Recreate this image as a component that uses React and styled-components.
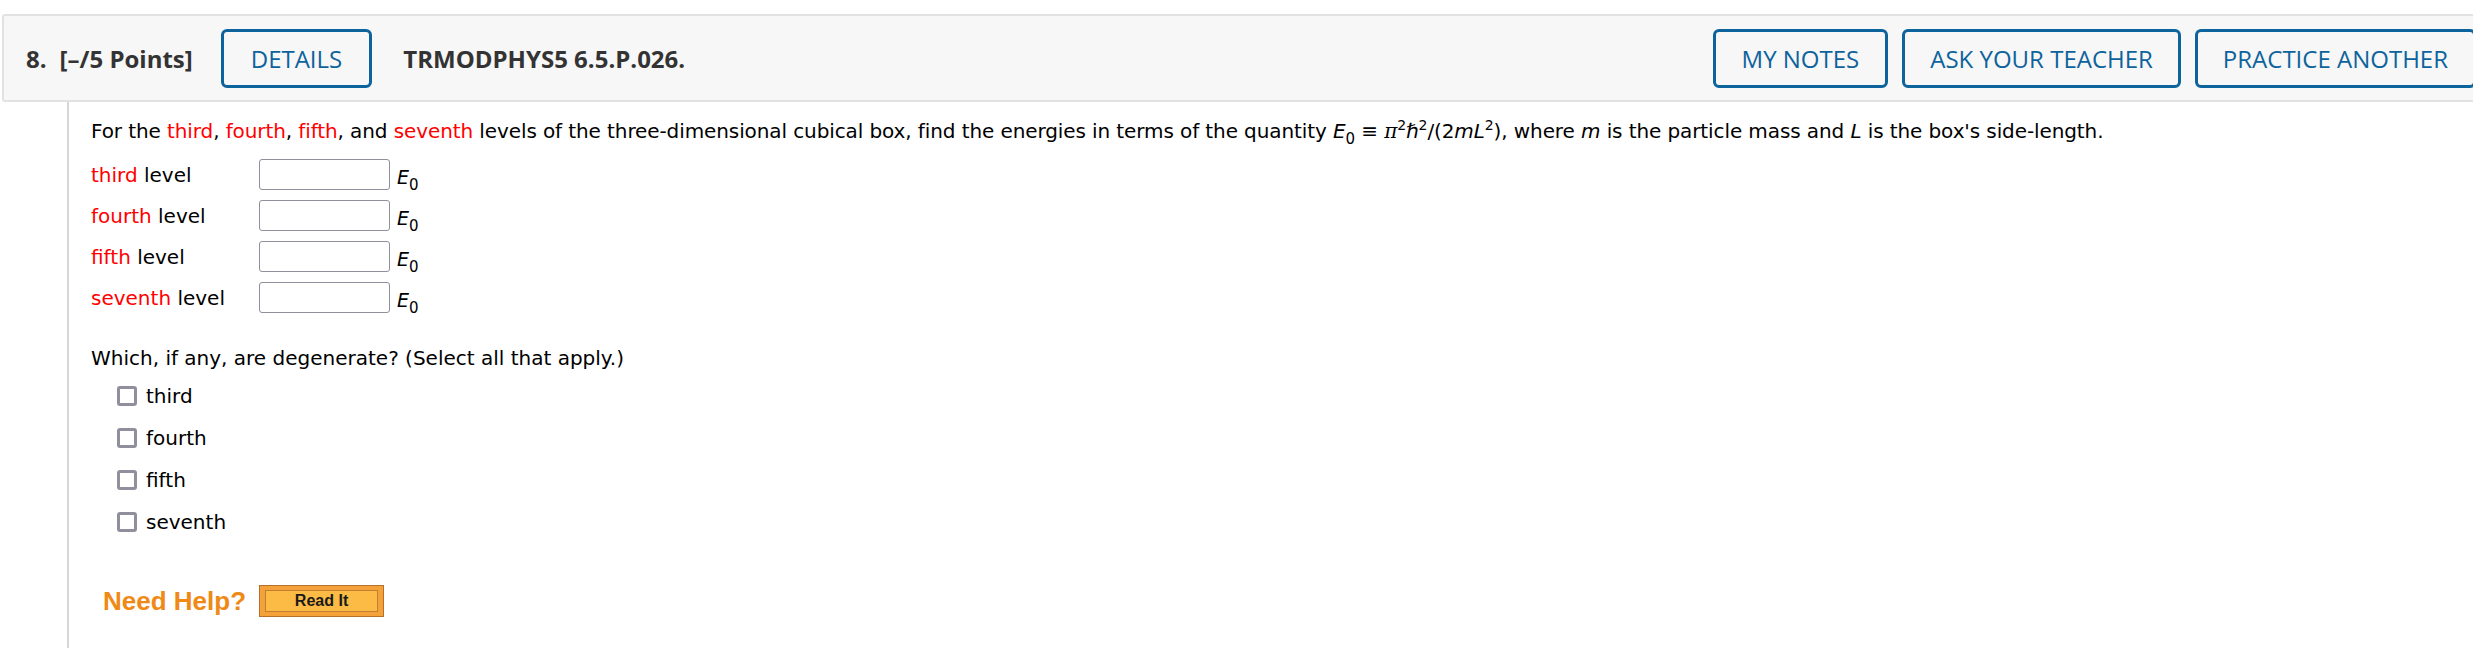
import React from 'react';
import styled, { createGlobalStyle } from 'styled-components';

const GlobalStyle = createGlobalStyle`
  html, body {
    margin: 0;
    padding: 0;
    background: #fff;
    overflow: hidden;
  }
`;

const levels = ['third', 'fourth', 'fifth', 'seventh'];

const Page = styled.div`
  width: 2500px;
  padding: 14px 0 0 2px;
  box-sizing: border-box;
`;

const Header = styled.div`
  display: flex;
  align-items: center;
  height: 88px;
  box-sizing: border-box;
  padding: 0 24px 0 22px;
  background: #f7f7f7;
  border: 2px solid #e2e2e2;
  border-right: none;
  border-radius: 3px 0 0 3px;
  font-family: 'Open Sans', sans-serif;
  font-size: 24px;
  color: #333;
`;

const Number = styled.span`
  font-weight: 700;
  margin-right: 13px;
`;

const Points = styled.span`
  font-weight: 700;
  margin-right: 28px;
`;

const Code = styled.span`
  font-weight: 700;
  margin-left: 31px;
`;

const Spacer = styled.div`
  flex: 1;
`;

const Actions = styled.div`
  display: flex;
  gap: 14px;
`;

const OutlineButton = styled.button`
  height: 59px;
  padding: 0 ${({ $pad }) => $pad || 25}px;
  box-sizing: border-box;
  background: transparent;
  border: 3px solid #0d639b;
  border-radius: 6px;
  font-family: 'Open Sans', sans-serif;
  font-size: 24px;
  font-weight: 400;
  color: #0d639b;
  text-transform: uppercase;
  white-space: nowrap;
`;

const Body = styled.div`
  margin-left: 65px;
  border-left: 2px solid #d6d6d6;
  padding: 16px 0 0 22px;
  min-height: 546px;
  box-sizing: border-box;
  font-family: 'DejaVu Sans', Verdana, sans-serif;
  font-size: 20px;
  line-height: 26px;
  color: #000;
`;

const Prompt = styled.p`
  margin: 0;
  white-space: nowrap;
  letter-spacing: -0.1px;
`;

const Red = styled.span`
  color: #f00;
`;

const Var = styled.i`
  font-style: italic;
`;

const Sub = styled.sub`
  font-size: 15px;
  font-style: normal;
  vertical-align: -6px;
  line-height: 0;
`;

const Sup = styled.sup`
  font-size: 14px;
  vertical-align: 8px;
  line-height: 0;
`;

const Pi = styled.span`
  font-family: 'DejaVu Serif', serif;
  font-style: italic;
`;

const Rows = styled.div`
  display: grid;
  grid-template-columns: 168px max-content max-content;
  row-gap: 10px;
  align-items: center;
  margin-top: 15px;
`;

const Answer = styled.input`
  width: 131px;
  height: 31px;
  box-sizing: border-box;
  border: 1px solid #8f8f9d;
  border-radius: 3px;
  background: #fff;
  margin: 0;
`;

const Unit = styled.span`
  margin-left: 7px;
  font-size: 19px;
  font-style: italic;
  padding-top: 4px;
`;

const Question = styled.p`
  margin: 32px 0 0;
`;

const Choices = styled.div`
  display: flex;
  flex-direction: column;
  gap: 16px;
  margin: 12px 0 0 26px;
`;

const Choice = styled.label`
  display: flex;
  align-items: center;
  gap: 9px;
`;

const Box = styled.span`
  width: 20px;
  height: 20px;
  box-sizing: border-box;
  border: 3px solid #8f8f9d;
  border-radius: 3px;
  background: #fff;
`;

const Help = styled.div`
  display: flex;
  align-items: center;
  gap: 13px;
  margin: 50px 0 0 12px;
`;

const HelpLabel = styled.span`
  font-family: 'Liberation Sans', Arial, sans-serif;
  font-size: 26px;
  font-weight: 700;
  color: #ef8a17;
`;

const ReadButton = styled.button`
  width: 125px;
  height: 32px;
  box-sizing: border-box;
  padding: 4px 5px;
  border: 1px solid #b5712c;
  background: #f4a13a;
  display: flex;
`;

const ReadFace = styled.span`
  flex: 1;
  display: flex;
  align-items: center;
  justify-content: center;
  border: 1px solid #c17f35;
  background: #fcbb45;
  font-family: 'Liberation Sans', Arial, sans-serif;
  font-size: 16px;
  font-weight: 700;
  color: #1a1a1a;
`;

const E0 = () => (
  <Var>
    E<Sub>0</Sub>
  </Var>
);

export default function App() {
  return (
    <>
      <GlobalStyle />
      <Page>
        <Header>
          <Number>8.</Number>
          <Points>[–/5 Points]</Points>
          <OutlineButton $pad={27}>Details</OutlineButton>
          <Code>TRMODPHYS5 6.5.P.026.</Code>
          <Spacer />
          <Actions>
            <OutlineButton $pad={26}>My Notes</OutlineButton>
            <OutlineButton>Ask Your Teacher</OutlineButton>
            <OutlineButton>Practice Another</OutlineButton>
          </Actions>
        </Header>
        <Body>
          <Prompt>
            For the <Red>third</Red>, <Red>fourth</Red>, <Red>fifth</Red>, and{' '}
            <Red>seventh</Red> levels of the three-dimensional cubical box, find the
            energies in terms of the quantity <E0 /> ≡ <Pi>π</Pi>
            <Sup>2</Sup>ℏ<Sup>2</Sup>/(2<Var>mL</Var>
            <Sup>2</Sup>), where <Var>m</Var> is the particle mass and <Var>L</Var> is
            the box's side-length.
          </Prompt>
          <Rows>
            {levels.map((level) => (
              <React.Fragment key={level}>
                <span>
                  <Red>{level}</Red> level
                </span>
                <Answer type="text" />
                <Unit>
                  E<Sub>0</Sub>
                </Unit>
              </React.Fragment>
            ))}
          </Rows>
          <Question>Which, if any, are degenerate? (Select all that apply.)</Question>
          <Choices>
            {levels.map((level) => (
              <Choice key={level}>
                <Box />
                {level}
              </Choice>
            ))}
          </Choices>
          <Help>
            <HelpLabel>Need Help?</HelpLabel>
            <ReadButton>
              <ReadFace>Read It</ReadFace>
            </ReadButton>
          </Help>
        </Body>
      </Page>
    </>
  );
}
